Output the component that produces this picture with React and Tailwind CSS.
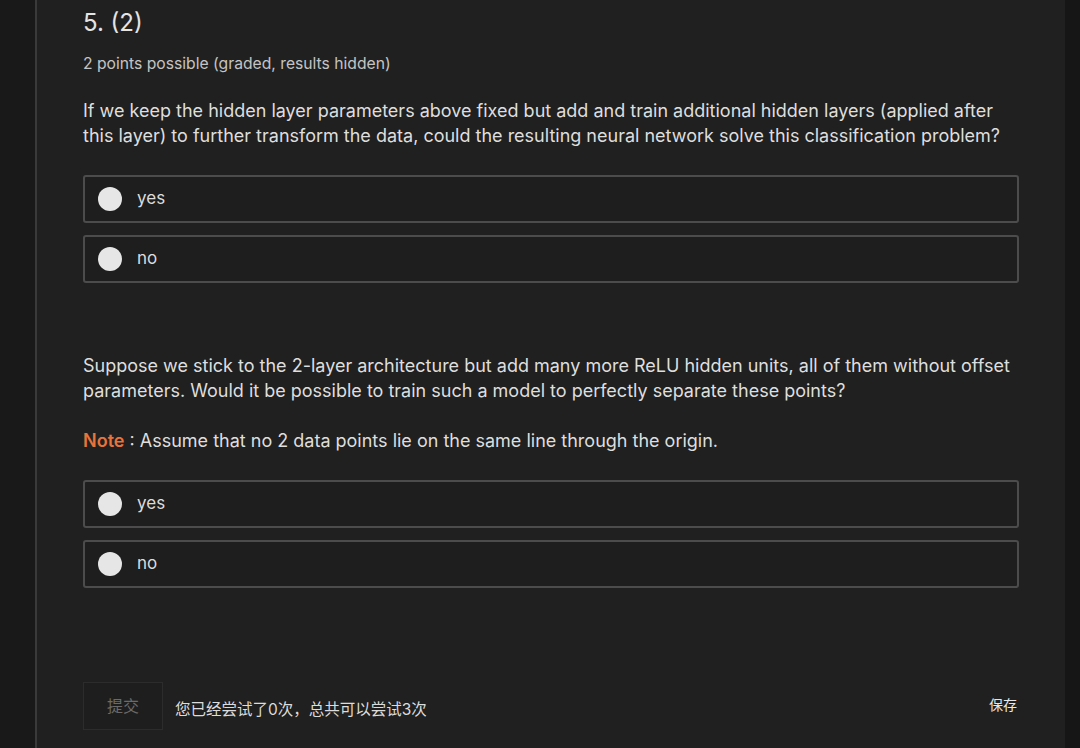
import React from "react";

function Option({ label }) {
  return (
    <div className="flex h-[48px] items-center rounded-[3px] border-2 border-[#4c4c4c] bg-[#1e1e1e] pl-[13px]">
      <span className="h-[24px] w-[24px] rounded-full bg-[#e6e6e6]" />
      <span className="ml-[15px] text-[17px] text-[#dcdcdc]">{label}</span>
    </div>
  );
}

export default function App() {
  return (
    <div
      className="flex h-[748px] w-[1080px] overflow-hidden bg-[#181818]"
      style={{ fontFamily: 'Inter, "Noto Sans CJK SC", sans-serif' }}
    >
      <div className="w-[35px] shrink-0 bg-[#191919]" />
      <div className="w-[2px] shrink-0 bg-[#3a3a3a]" />
      <div className="flex w-[1028px] shrink-0 flex-col bg-[#202020] pl-[46px] pr-[46px]">
        <h2 className="mt-[6px] text-[24px] leading-[34px] text-[#e4e4e4]">5. (2)</h2>
        <p className="mt-[12px] text-[15.7px] leading-[24px] text-[#c4c4c4]">
          2 points possible (graded, results hidden)
        </p>
        <p className="mt-[22px] text-[18px] leading-[25px] text-[#dedede]">
          If we keep the hidden layer parameters above fixed but add and train additional hidden layers (applied after this layer) to further transform the data, could the resulting neural network solve this classification problem?
        </p>
        <div className="mt-[27px] flex flex-col gap-[12px]">
          <Option label="yes" />
          <Option label="no" />
        </div>
        <p className="mt-[70px] text-[18px] leading-[25px] text-[#dedede]">
          Suppose we stick to the 2-layer architecture but add many more ReLU hidden units, all of them without offset parameters. Would it be possible to train such a model to perfectly separate these points?
        </p>
        <p className="mt-[25px] text-[18px] leading-[25px] text-[#dedede]">
          <span className="font-semibold text-[#e8743b]">Note</span> : Assume that no 2 data points lie on the same line through the origin.
        </p>
        <div className="mt-[27px] flex flex-col gap-[12px]">
          <Option label="yes" />
          <Option label="no" />
        </div>
        <div className="mt-[94px] flex items-center">
          <button className="flex h-[48px] w-[80px] items-center justify-center border border-[#2c2c2c] bg-[#1e1e1e] text-[16px] text-[#6a6a6a]">
            提交
          </button>
          <span className="ml-[12px] mt-[8px] text-[15.5px] text-[#dcdcdc]">
            您已经尝试了0次，总共可以尝试3次
          </span>
          <span className="ml-auto mr-[2px] mt-[-4px] text-[14px] text-[#e8e8e8]">保存</span>
        </div>
      </div>
      <div className="flex-1 bg-[#161616]" />
    </div>
  );
}
